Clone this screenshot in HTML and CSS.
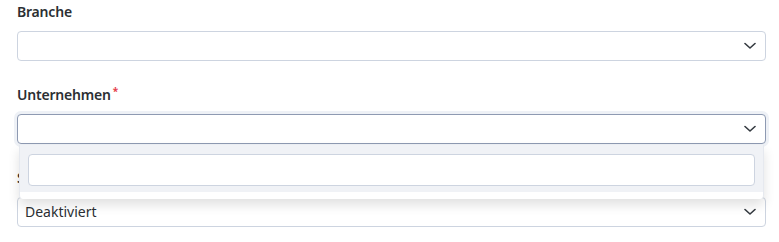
FILE: index.html
```html
<!DOCTYPE html>
<html lang="de">
<head>
<meta charset="utf-8">
<title>Formular</title>
<link rel="stylesheet" href="styles.css">
</head>
<body>
<form class="form">
  <div class="group">
    <label class="label">Branche</label>
    <div class="select">
      <span class="value"></span>
      <svg class="chev" width="12" height="8" viewBox="0 0 12 8"><polyline points="1,1.5 6,6 11,1.5" fill="none" stroke="#343a40" stroke-width="1.6" stroke-linecap="round" stroke-linejoin="round"/></svg>
    </div>
  </div>
  <div class="group open">
    <label class="label">Unternehmen<span class="req">*</span></label>
    <div class="select focus">
      <span class="value"></span>
      <svg class="chev" width="12" height="8" viewBox="0 0 12 8"><polyline points="1,1.5 6,6 11,1.5" fill="none" stroke="#343a40" stroke-width="1.6" stroke-linecap="round" stroke-linejoin="round"/></svg>
    </div>
    <div class="dropdown">
      <div class="search-wrap"><input class="search" type="text"></div>
      <div class="results"></div>
    </div>
  </div>
  <div class="group">
    <label class="label">Status</label>
    <div class="select">
      <span class="value">Deaktiviert</span>
      <svg class="chev" width="12" height="8" viewBox="0 0 12 8"><polyline points="1,1.5 6,6 11,1.5" fill="none" stroke="#343a40" stroke-width="1.6" stroke-linecap="round" stroke-linejoin="round"/></svg>
    </div>
  </div>
</form>
</body>
</html>
```
FILE: styles.css
```css
* { box-sizing: border-box; }
html, body { margin: 0; padding: 0; background: #fff; }
body {
  font-family: "Noto Sans", "Open Sans", "DejaVu Sans", sans-serif;
  font-size: 14px;
  color: #212529;
}
.form {
  padding: 1px 13px 0 17px;
}
.group {
  position: relative;
  margin-bottom: 23px;
}
.label {
  display: block;
  height: 21px;
  font-weight: 600;
  line-height: 21px;
  margin-bottom: 9px;
  color: #2b2f33;
  letter-spacing: -0.2px;
}
.req {
  position: relative;
  top: -5px;
  color: #e5414b;
  font-size: 10px;
  line-height: 0;
  margin-left: 2px;
  font-weight: 700;
}
.select {
  display: flex;
  align-items: center;
  justify-content: space-between;
  height: 30px;
  border: 1px solid #cdd4e0;
  border-radius: 4px;
  padding: 0 8px 0 7px;
  background: #fff;
}
.select.focus {
  border-color: #8e9ab2;
  box-shadow: 0 0 0 3px #eef1f6;
}
.value {
  line-height: 20px;
  color: #2b2f33;
}
.chev { display: block; margin-right: 1px; }
.dropdown {
  position: absolute;
  left: 2px;
  right: 2px;
  top: 61px;
  background: #fff;
  border-left: 1px solid #e6e9ef;
  border-right: 1px solid #e6e9ef;
  border-radius: 0 0 4px 4px;
  box-shadow: 0 6px 12px rgba(0, 0, 0, 0.12);
  z-index: 10;
}
.search-wrap {
  background: #f0f2f6;
  padding: 9px 8px 6px 8px;
}
.search {
  display: block;
  width: 100%;
  height: 32px;
  border: 1px solid #cdd4e0;
  border-radius: 4px;
  background: #fff;
  outline: none;
  font: inherit;
}
.results {
  height: 7px;
}
```
